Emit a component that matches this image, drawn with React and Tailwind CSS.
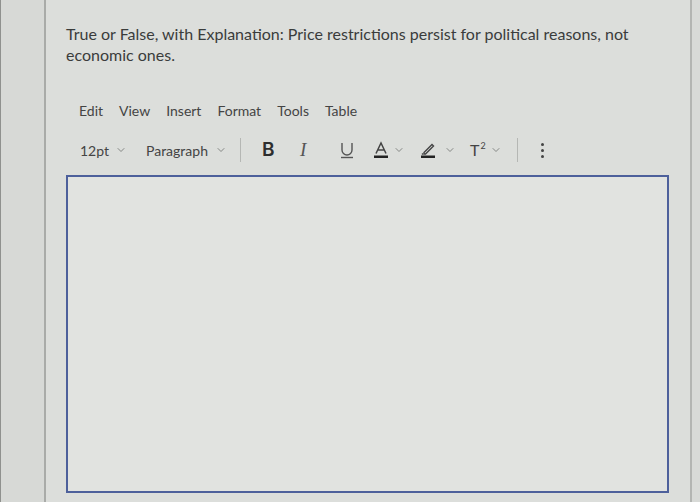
import { ChevronDown } from 'lucide-react'

const font = { fontFamily: 'Lato, "Open Sans", sans-serif' }

function Chev({ className = 'ml-[6px]' }) {
  return <ChevronDown className={`${className} h-3 w-3 text-[#6f716f]`} strokeWidth={1.6} />
}

export default function App() {
  return (
    <div className="flex h-[502px] w-[700px] overflow-hidden bg-[#dcdedb] text-[#3b3d3c]" style={font}>
      <div className="w-[46px] shrink-0 border-l border-r-2 border-l-[#8f918e] border-r-[#a9aba8] bg-[#d7d9d6]" />
      <div className="flex w-[644px] flex-col pl-5 pr-[22px]">
        <p className="mt-[23px] text-[16px] leading-[21px] text-[#3a3c3b]">
          True or False, with Explanation: Price restrictions persist for political reasons, not economic ones.
        </p>

        <div className="mt-[35px] flex items-center gap-[16px] pl-[13px] text-[14px] text-[#444]">
          <span>Edit</span>
          <span>View</span>
          <span>Insert</span>
          <span>Format</span>
          <span>Tools</span>
          <span>Table</span>
        </div>

        <div className="mt-[16px] flex h-[26px] items-center pl-[14px] text-[14px] text-[#444]">
          <span className="flex w-[48px] items-center">12pt<Chev /></span>
          <span className="ml-[18px] flex items-center">Paragraph<Chev className="ml-[7px]" /></span>
          <span className="ml-[13px] h-[24px] w-px bg-[#b5b7b4]" />
          <span className="ml-[21px] w-[14px] text-[19px] font-semibold text-[#2e2e2e]" style={{ fontFamily: 'Inter, sans-serif' }}>B</span>
          <span className="ml-[24px] w-[9px] text-[19px] italic text-[#555]" style={{ fontFamily: '"Liberation Serif", serif' }}>I</span>
          <svg className="ml-[31px]" width="14" height="18" viewBox="0 0 14 18" fill="none" stroke="#555" strokeWidth="1.4">
            <path d="M2 2v7a5 5 0 0 0 10 0V2" />
            <path d="M1 16.5h12" />
          </svg>
          <span className="ml-[19px] flex items-center">
            <svg width="16" height="18" viewBox="0 0 16 18" fill="none">
              <path d="M3 12.5 8 2l5 10.5M4.7 9h6.6" stroke="#444" strokeWidth="1.5" />
              <rect x="1" y="14.5" width="14" height="2.5" fill="#222" />
            </svg>
            <Chev className="ml-[4px]" />
          </span>
          <span className="ml-[15px] flex items-center">
            <svg width="16" height="18" viewBox="0 0 16 18" fill="none">
              <path d="M4 11.5 12 3.5l1.5 1.5-8 8H4z" stroke="#444" strokeWidth="1.4" />
              <path d="M3 12.5 2 13.5" stroke="#444" strokeWidth="1.4" />
              <rect x="1" y="14.5" width="14" height="2.5" fill="#222" />
            </svg>
            <Chev className="ml-[8px]" />
          </span>
          <span className="ml-[14px] flex w-[32px] items-center text-[16px] text-[#444]">
            T<sup className="ml-px text-[9px]">2</sup>
            <Chev className="ml-[4px]" />
          </span>
          <span className="ml-[15px] h-[24px] w-px bg-[#b5b7b4]" />
          <span className="ml-[23px] flex flex-col gap-[3px]">
            <span className="h-[3px] w-[3px] rounded-full bg-[#444]" />
            <span className="h-[3px] w-[3px] rounded-full bg-[#444]" />
            <span className="h-[3px] w-[3px] rounded-full bg-[#444]" />
          </span>
        </div>

        <div className="mt-[12px] h-[318px] w-[603px] border-2 border-[#4d609b] bg-[#e1e3e0]" />
      </div>
      <div className="flex-1 border-l-2 border-l-[#b3b5b2] bg-[#d8dad7]" />
    </div>
  )
}
